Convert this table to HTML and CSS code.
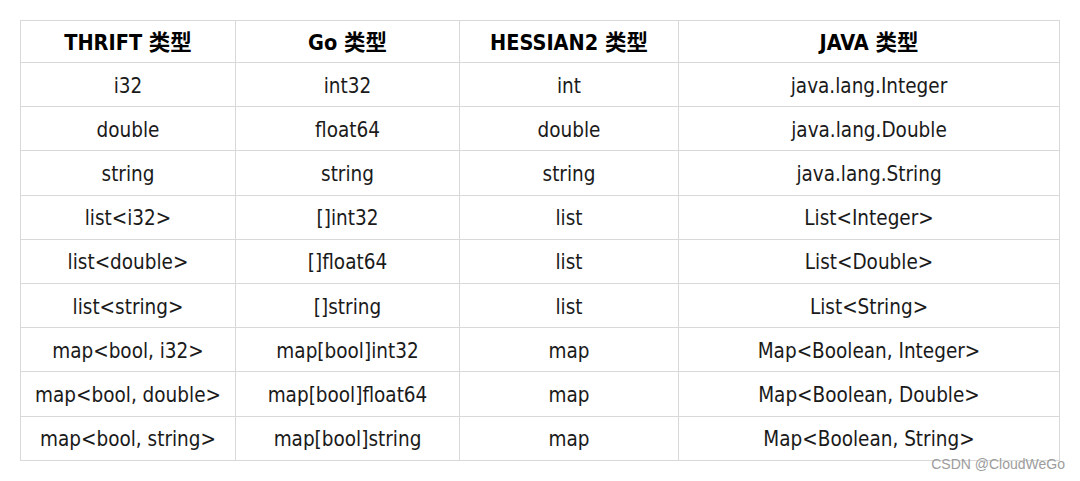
FILE: index.html
```html
<!DOCTYPE html>
<html lang="zh">
<head>
<meta charset="utf-8">
<link rel="stylesheet" href="styles.css">
</head>
<body>
<div class="page">
  <div class="grid">
    <div class="cell head">THRIFT 类型</div>
    <div class="cell head">Go 类型</div>
    <div class="cell head">HESSIAN2 类型</div>
    <div class="cell head">JAVA 类型</div>

    <div class="cell">i32</div>
    <div class="cell">int32</div>
    <div class="cell">int</div>
    <div class="cell">java.lang.Integer</div>

    <div class="cell">double</div>
    <div class="cell">float64</div>
    <div class="cell">double</div>
    <div class="cell">java.lang.Double</div>

    <div class="cell">string</div>
    <div class="cell">string</div>
    <div class="cell">string</div>
    <div class="cell">java.lang.String</div>

    <div class="cell">list&lt;i32&gt;</div>
    <div class="cell">[]int32</div>
    <div class="cell">list</div>
    <div class="cell">List&lt;Integer&gt;</div>

    <div class="cell">list&lt;double&gt;</div>
    <div class="cell">[]float64</div>
    <div class="cell">list</div>
    <div class="cell">List&lt;Double&gt;</div>

    <div class="cell">list&lt;string&gt;</div>
    <div class="cell">[]string</div>
    <div class="cell">list</div>
    <div class="cell">List&lt;String&gt;</div>

    <div class="cell">map&lt;bool, i32&gt;</div>
    <div class="cell">map[bool]int32</div>
    <div class="cell">map</div>
    <div class="cell">Map&lt;Boolean, Integer&gt;</div>

    <div class="cell">map&lt;bool, double&gt;</div>
    <div class="cell">map[bool]float64</div>
    <div class="cell">map</div>
    <div class="cell">Map&lt;Boolean, Double&gt;</div>

    <div class="cell">map&lt;bool, string&gt;</div>
    <div class="cell">map[bool]string</div>
    <div class="cell">map</div>
    <div class="cell">Map&lt;Boolean, String&gt;</div>
  </div>
  <div class="watermark">CSDN @CloudWeGo</div>
</div>
</body>
</html>
```

FILE: styles.css
```css
html, body {
  margin: 0;
  padding: 0;
  background: #ffffff;
}

.page {
  position: relative;
  width: 1080px;
  height: 481px;
  padding: 20px 0 0 20px;
  box-sizing: border-box;
}

.grid {
  display: grid;
  grid-template-columns: 215px 224px 219px 381px;
  grid-template-rows: 42px repeat(9, 44.2px);
  width: 1040px;
  border-top: 1px solid #d9d9d9;
  border-left: 1px solid #d9d9d9;
  box-sizing: border-box;
}

.cell {
  display: flex;
  align-items: center;
  justify-content: center;
  padding-top: 2px;
  border-right: 1px solid #d9d9d9;
  border-bottom: 1px solid #d9d9d9;
  font-family: "DejaVu Sans Condensed", "DejaVu Sans", "Noto Sans CJK SC", sans-serif;
  font-size: 20.5px;
  color: #1a1a1a;
  white-space: nowrap;
}

.head {
  font-weight: bold;
  color: #000000;
  font-size: 21.5px;
  padding-top: 0;
  padding-bottom: 2px;
}

.watermark {
  position: absolute;
  right: 15px;
  bottom: 9px;
  font-family: "Liberation Sans", Arial, sans-serif;
  font-size: 14px;
  color: #9c9c9c;
}
```
